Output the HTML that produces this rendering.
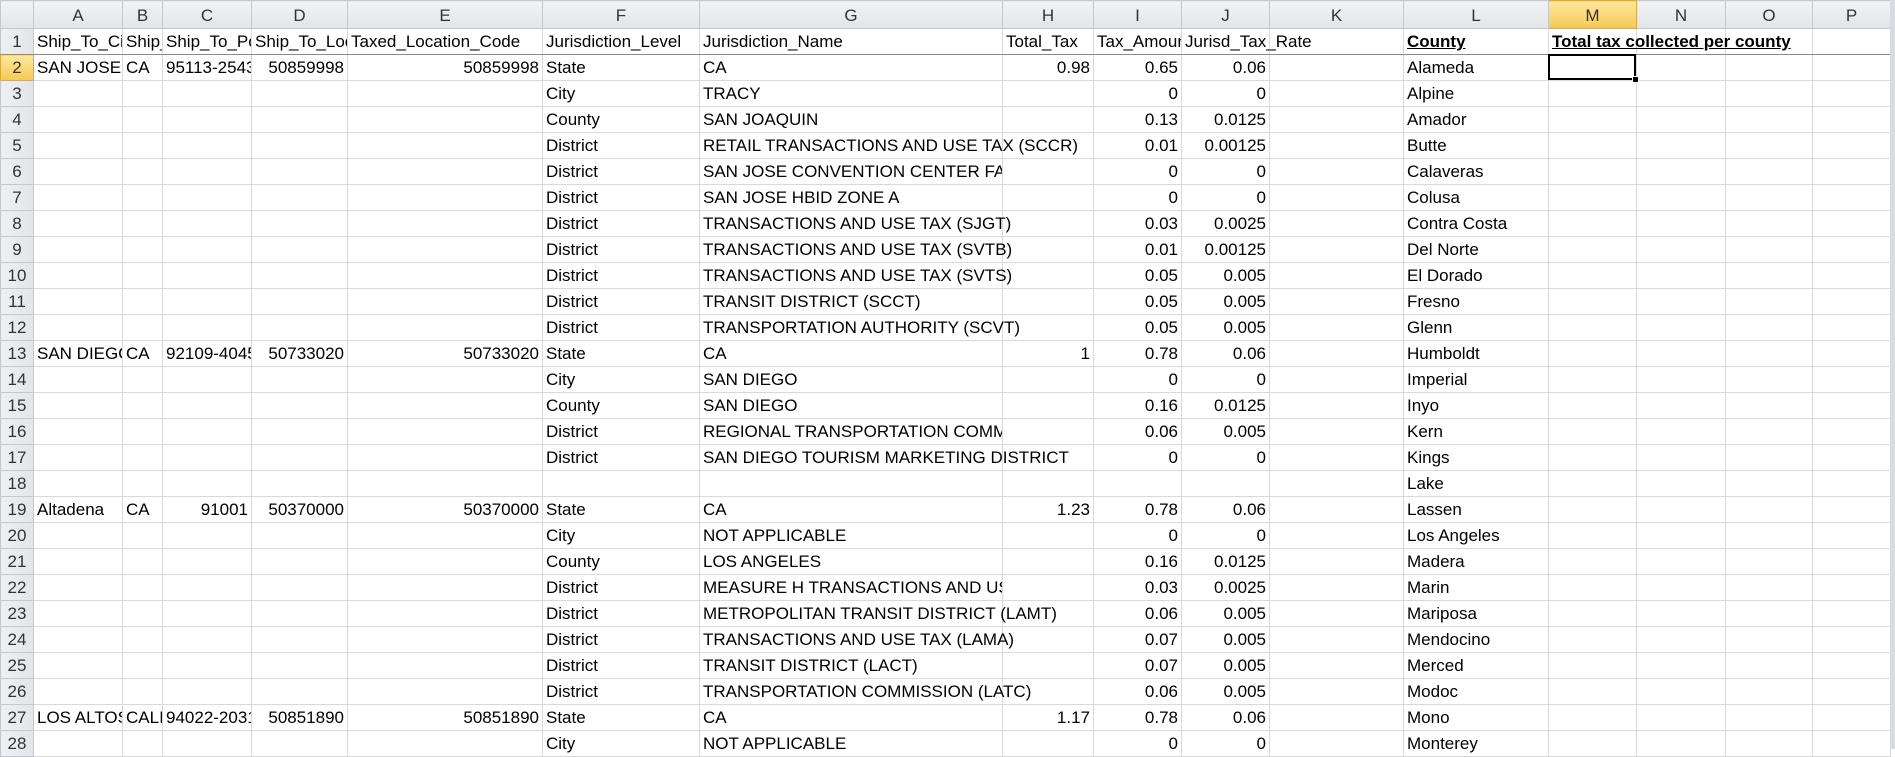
<!DOCTYPE html>
<html><head><meta charset="utf-8"><style>
html,body{margin:0;padding:0;background:#fff;width:1895px;height:749px;overflow:hidden}
table{border-collapse:collapse;table-layout:fixed;width:1890px;position:absolute;left:0;top:0;font-family:"Liberation Sans",sans-serif;font-size:17px;color:#000}
td{height:25px;border:1px solid #d9d9d9;padding:0 3px;white-space:nowrap;overflow:hidden;line-height:25px;vertical-align:bottom}
td:not(:empty){background:#fff;position:relative}
td.s{overflow:visible}
tr.h td{height:27px;background:linear-gradient(#f2f3f5,#e1e4e8);border-color:#c5c9cf;text-align:center;color:#333;font-size:17px;position:relative}
td.rh{background:linear-gradient(90deg,#eef0f2,#e2e5e9);border-color:#c5c9cf;text-align:center;color:#333;padding:0;position:relative}
td.sel{background:linear-gradient(#fde79f,#f6c955)!important;border-color:#e2a93a!important}
.r{text-align:right}
.b{font-weight:bold;text-decoration:underline}
tr.r1 td{border-bottom:1px solid #8a8a8a}
.cur{position:absolute;left:1548px;top:54px;width:84px;height:22px;border:2px solid #000;pointer-events:none}
.cur:after{content:"";position:absolute;right:-5px;bottom:-5px;width:5px;height:5px;background:#000;border:1px solid #fff}
.sb{position:absolute;left:1890px;top:0;width:5px;height:749px;background:#d8dbe0}
</style></head><body>
<table>
<colgroup><col style="width:33px"><col style="width:89px"><col style="width:40px"><col style="width:89px"><col style="width:96px"><col style="width:195px"><col style="width:157px"><col style="width:303px"><col style="width:91px"><col style="width:88px"><col style="width:88px"><col style="width:134px"><col style="width:145px"><col style="width:88px"><col style="width:89px"><col style="width:87px"><col style="width:78px"></colgroup>
<tr class="h"><td class="rh"></td><td>A</td><td>B</td><td>C</td><td>D</td><td>E</td><td>F</td><td>G</td><td>H</td><td>I</td><td>J</td><td>K</td><td>L</td><td class="sel">M</td><td>N</td><td>O</td><td>P</td></tr>
<tr class="r1"><td class="rh">1</td><td>Ship_To_City</td><td>Ship_To_State</td><td>Ship_To_Postal</td><td>Ship_To_Location</td><td>Taxed_Location_Code</td><td>Jurisdiction_Level</td><td>Jurisdiction_Name</td><td>Total_Tax</td><td>Tax_Amount</td><td class="s">Jurisd_Tax_Rate</td><td></td><td><span class="b">County</span></td><td class="s"><span class="b">Total tax collected per county</span></td><td></td><td></td><td></td></tr>
<tr><td class="rh sel">2</td><td>SAN JOSE</td><td>CA</td><td>95113-2543</td><td class="r">50859998</td><td class="r">50859998</td><td>State</td><td>CA</td><td class="r">0.98</td><td class="r">0.65</td><td class="r">0.06</td><td></td><td>Alameda</td><td></td><td></td><td></td><td></td></tr>
<tr><td class="rh">3</td><td></td><td></td><td></td><td></td><td></td><td>City</td><td>TRACY</td><td></td><td class="r">0</td><td class="r">0</td><td></td><td>Alpine</td><td></td><td></td><td></td><td></td></tr>
<tr><td class="rh">4</td><td></td><td></td><td></td><td></td><td></td><td>County</td><td>SAN JOAQUIN</td><td></td><td class="r">0.13</td><td class="r">0.0125</td><td></td><td>Amador</td><td></td><td></td><td></td><td></td></tr>
<tr><td class="rh">5</td><td></td><td></td><td></td><td></td><td></td><td>District</td><td class="s">RETAIL TRANSACTIONS AND USE TAX (SCCR)</td><td></td><td class="r">0.01</td><td class="r">0.00125</td><td></td><td>Butte</td><td></td><td></td><td></td><td></td></tr>
<tr><td class="rh">6</td><td></td><td></td><td></td><td></td><td></td><td>District</td><td>SAN JOSE CONVENTION CENTER FACILITIES DISTRICT</td><td></td><td class="r">0</td><td class="r">0</td><td></td><td>Calaveras</td><td></td><td></td><td></td><td></td></tr>
<tr><td class="rh">7</td><td></td><td></td><td></td><td></td><td></td><td>District</td><td>SAN JOSE HBID ZONE A</td><td></td><td class="r">0</td><td class="r">0</td><td></td><td>Colusa</td><td></td><td></td><td></td><td></td></tr>
<tr><td class="rh">8</td><td></td><td></td><td></td><td></td><td></td><td>District</td><td class="s">TRANSACTIONS AND USE TAX (SJGT)</td><td></td><td class="r">0.03</td><td class="r">0.0025</td><td></td><td>Contra Costa</td><td></td><td></td><td></td><td></td></tr>
<tr><td class="rh">9</td><td></td><td></td><td></td><td></td><td></td><td>District</td><td class="s">TRANSACTIONS AND USE TAX (SVTB)</td><td></td><td class="r">0.01</td><td class="r">0.00125</td><td></td><td>Del Norte</td><td></td><td></td><td></td><td></td></tr>
<tr><td class="rh">10</td><td></td><td></td><td></td><td></td><td></td><td>District</td><td class="s">TRANSACTIONS AND USE TAX (SVTS)</td><td></td><td class="r">0.05</td><td class="r">0.005</td><td></td><td>El Dorado</td><td></td><td></td><td></td><td></td></tr>
<tr><td class="rh">11</td><td></td><td></td><td></td><td></td><td></td><td>District</td><td>TRANSIT DISTRICT (SCCT)</td><td></td><td class="r">0.05</td><td class="r">0.005</td><td></td><td>Fresno</td><td></td><td></td><td></td><td></td></tr>
<tr><td class="rh">12</td><td></td><td></td><td></td><td></td><td></td><td>District</td><td class="s">TRANSPORTATION AUTHORITY (SCVT)</td><td></td><td class="r">0.05</td><td class="r">0.005</td><td></td><td>Glenn</td><td></td><td></td><td></td><td></td></tr>
<tr><td class="rh">13</td><td>SAN DIEGO</td><td>CA</td><td>92109-4045</td><td class="r">50733020</td><td class="r">50733020</td><td>State</td><td>CA</td><td class="r">1</td><td class="r">0.78</td><td class="r">0.06</td><td></td><td>Humboldt</td><td></td><td></td><td></td><td></td></tr>
<tr><td class="rh">14</td><td></td><td></td><td></td><td></td><td></td><td>City</td><td>SAN DIEGO</td><td></td><td class="r">0</td><td class="r">0</td><td></td><td>Imperial</td><td></td><td></td><td></td><td></td></tr>
<tr><td class="rh">15</td><td></td><td></td><td></td><td></td><td></td><td>County</td><td>SAN DIEGO</td><td></td><td class="r">0.16</td><td class="r">0.0125</td><td></td><td>Inyo</td><td></td><td></td><td></td><td></td></tr>
<tr><td class="rh">16</td><td></td><td></td><td></td><td></td><td></td><td>District</td><td>REGIONAL TRANSPORTATION COMMISSION (SDRT)</td><td></td><td class="r">0.06</td><td class="r">0.005</td><td></td><td>Kern</td><td></td><td></td><td></td><td></td></tr>
<tr><td class="rh">17</td><td></td><td></td><td></td><td></td><td></td><td>District</td><td class="s">SAN DIEGO TOURISM MARKETING DISTRICT</td><td></td><td class="r">0</td><td class="r">0</td><td></td><td>Kings</td><td></td><td></td><td></td><td></td></tr>
<tr><td class="rh">18</td><td></td><td></td><td></td><td></td><td></td><td></td><td></td><td></td><td></td><td></td><td></td><td>Lake</td><td></td><td></td><td></td><td></td></tr>
<tr><td class="rh">19</td><td>Altadena</td><td>CA</td><td class="r">91001</td><td class="r">50370000</td><td class="r">50370000</td><td>State</td><td>CA</td><td class="r">1.23</td><td class="r">0.78</td><td class="r">0.06</td><td></td><td>Lassen</td><td></td><td></td><td></td><td></td></tr>
<tr><td class="rh">20</td><td></td><td></td><td></td><td></td><td></td><td>City</td><td>NOT APPLICABLE</td><td></td><td class="r">0</td><td class="r">0</td><td></td><td>Los Angeles</td><td></td><td></td><td></td><td></td></tr>
<tr><td class="rh">21</td><td></td><td></td><td></td><td></td><td></td><td>County</td><td>LOS ANGELES</td><td></td><td class="r">0.16</td><td class="r">0.0125</td><td></td><td>Madera</td><td></td><td></td><td></td><td></td></tr>
<tr><td class="rh">22</td><td></td><td></td><td></td><td></td><td></td><td>District</td><td>MEASURE H TRANSACTIONS AND USE TAX (LACH)</td><td></td><td class="r">0.03</td><td class="r">0.0025</td><td></td><td>Marin</td><td></td><td></td><td></td><td></td></tr>
<tr><td class="rh">23</td><td></td><td></td><td></td><td></td><td></td><td>District</td><td class="s">METROPOLITAN TRANSIT DISTRICT (LAMT)</td><td></td><td class="r">0.06</td><td class="r">0.005</td><td></td><td>Mariposa</td><td></td><td></td><td></td><td></td></tr>
<tr><td class="rh">24</td><td></td><td></td><td></td><td></td><td></td><td>District</td><td class="s">TRANSACTIONS AND USE TAX (LAMA)</td><td></td><td class="r">0.07</td><td class="r">0.005</td><td></td><td>Mendocino</td><td></td><td></td><td></td><td></td></tr>
<tr><td class="rh">25</td><td></td><td></td><td></td><td></td><td></td><td>District</td><td>TRANSIT DISTRICT (LACT)</td><td></td><td class="r">0.07</td><td class="r">0.005</td><td></td><td>Merced</td><td></td><td></td><td></td><td></td></tr>
<tr><td class="rh">26</td><td></td><td></td><td></td><td></td><td></td><td>District</td><td class="s">TRANSPORTATION COMMISSION (LATC)</td><td></td><td class="r">0.06</td><td class="r">0.005</td><td></td><td>Modoc</td><td></td><td></td><td></td><td></td></tr>
<tr><td class="rh">27</td><td>LOS ALTOS</td><td>CALIFORNIA</td><td>94022-2031</td><td class="r">50851890</td><td class="r">50851890</td><td>State</td><td>CA</td><td class="r">1.17</td><td class="r">0.78</td><td class="r">0.06</td><td></td><td>Mono</td><td></td><td></td><td></td><td></td></tr>
<tr><td class="rh">28</td><td></td><td></td><td></td><td></td><td></td><td>City</td><td>NOT APPLICABLE</td><td></td><td class="r">0</td><td class="r">0</td><td></td><td>Monterey</td><td></td><td></td><td></td><td></td></tr>
</table>
<div class="cur"></div>
<div class="sb"></div>
</body></html>
